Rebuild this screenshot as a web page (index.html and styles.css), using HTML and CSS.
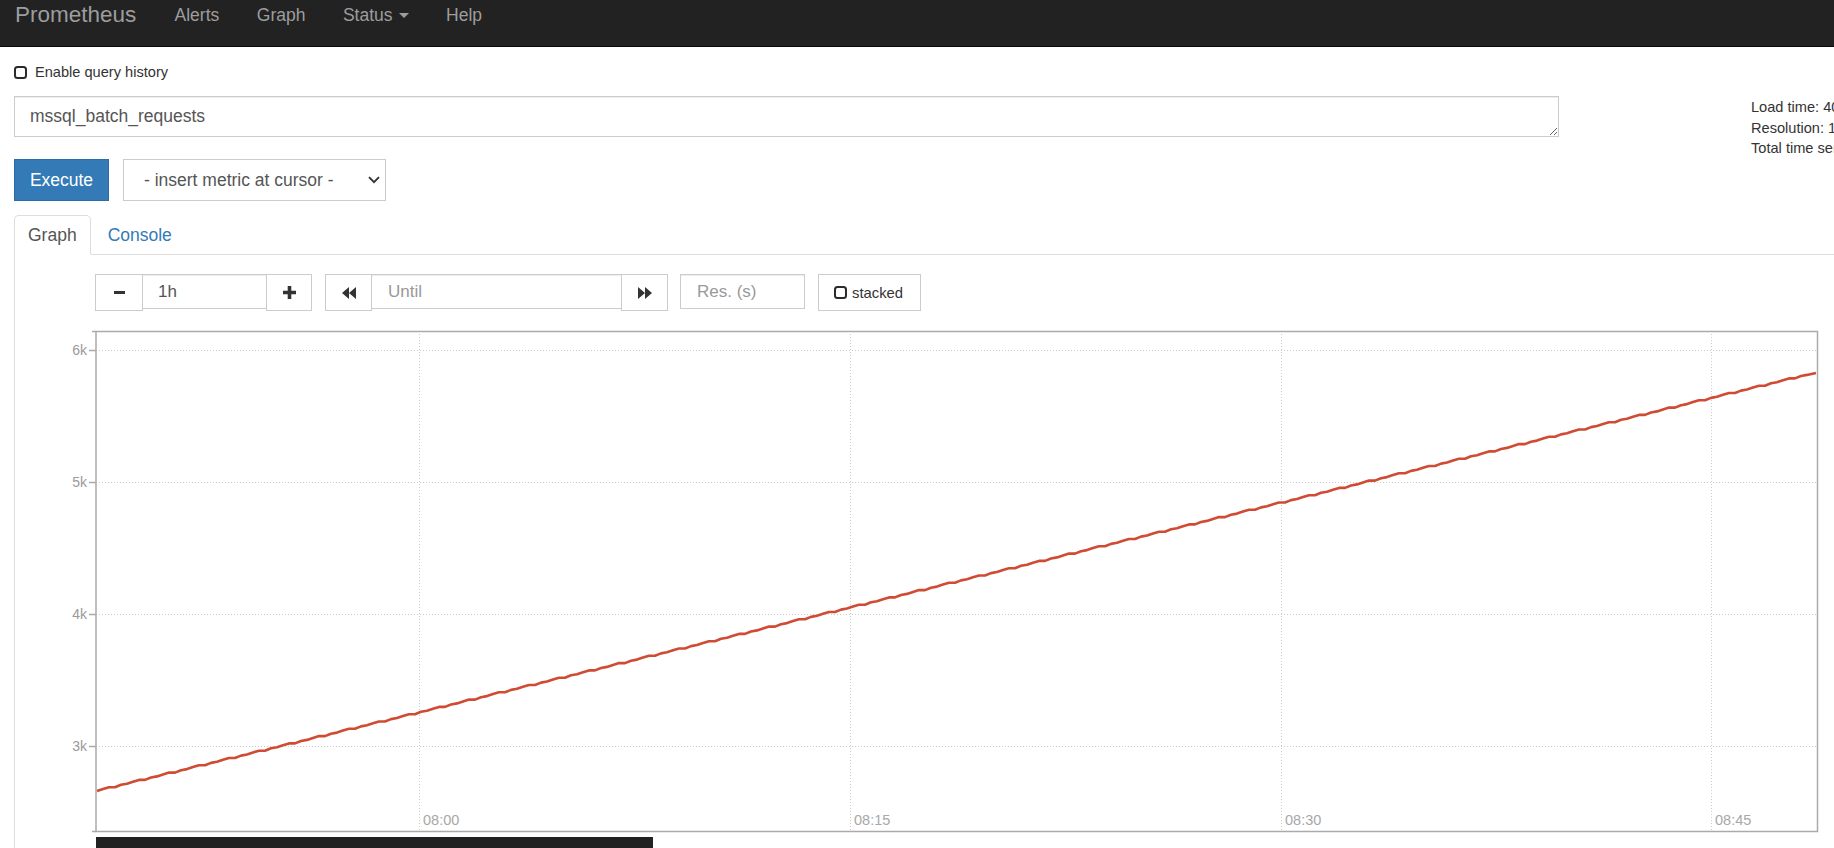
FILE: index.html
```html
<!DOCTYPE html>
<html>
<head>
<meta charset="utf-8">
<title>Prometheus Time Series Collection and Processing Server</title>
<link rel="stylesheet" href="styles.css">
</head>
<body>
<nav class="navbar">
  <span class="brand">Prometheus</span>
  <span class="nav-link">Alerts</span>
  <span class="nav-link">Graph</span>
  <span class="nav-link">Status <span class="caret"></span></span>
  <span class="nav-link">Help</span>
</nav>
<div class="page">
  <label class="history"><input type="checkbox" class="check"> Enable query history</label>
  <div class="query-row">
    <textarea class="expr" rows="1">mssql_batch_requests</textarea>
    <div class="stats">
      <div>Load time: 40ms</div>
      <div>Resolution: 14s</div>
      <div>Total time series: 1</div>
    </div>
  </div>
  <div class="exec-row">
    <button class="btn-primary">Execute</button>
    <div class="select-wrap">
      <select class="metric-select"><option>- insert metric at cursor -</option></select>
      <svg class="chevron" width="12" height="8" viewBox="0 0 12 8"><path d="M1 1.2L6 6.2L11 1.2" fill="none" stroke="#333" stroke-width="1.9"/></svg>
    </div>
  </div>
  <div class="tabs">
    <div class="tab active">Graph</div>
    <div class="tab link">Console</div>
  </div>
  <div class="tab-content">
    <div class="controls">
      <div class="group">
        <button class="btn w48"><svg width="11" height="3" viewBox="0 0 11 3"><rect width="11" height="3" fill="#333"/></svg></button>
        <input class="field w123" value="1h">
        <button class="btn w46"><svg width="13" height="13" viewBox="0 0 13 13"><path d="M4.7 0h3.6v4.7H13v3.6H8.3V13H4.7V8.3H0V4.7h4.7z" fill="#333"/></svg></button>
      </div>
      <div class="group">
        <button class="btn w47"><svg width="14" height="12" viewBox="0 0 14 12"><path d="M7 0L0 6L7 12ZM14 0L7 6L14 12Z" fill="#333"/></svg></button>
        <input class="field w249" placeholder="Until">
        <button class="btn w47"><svg width="14" height="12" viewBox="0 0 14 12"><path d="M0 0L7 6L0 12ZM7 0L14 6L7 12Z" fill="#333"/></svg></button>
      </div>
      <input class="field full w125" placeholder="Res. (s)">
      <button class="btn stacked"><input type="checkbox" class="check"> stacked</button>
    </div>
    <svg class="chart" width="1774" height="510" viewBox="0 0 1774 510">
      <g stroke="#ccc" stroke-width="1" stroke-dasharray="1 2" fill="none">
        <path d="M36 25.5H1757M36 157.5H1757M36 289.5H1757M36 421.5H1757"/>
        <path d="M359.5 6V506M790.5 6V506M1221.5 6V506M1651.5 6V506"/>
      </g>
      <g stroke="#aaa" stroke-width="1.5" fill="none">
        <path d="M32 6.5H1757.5V506.5H36V6.5"/>
        <path d="M32 506.5H36"/>
        <path d="M29 25.5H36M29 157.5H36M29 289.5H36M29 421.5H36"/>
      </g>
      <g class="ylab" text-anchor="end">
        <text x="27" y="30">6k</text>
        <text x="27" y="162">5k</text>
        <text x="27" y="294">4k</text>
        <text x="27" y="426">3k</text>
      </g>
      <g class="xlab">
        <text x="363" y="500">08:00</text>
        <text x="794" y="500">08:15</text>
        <text x="1225" y="500">08:30</text>
        <text x="1655" y="500">08:45</text>
      </g>
      <path class="series" d="M37 466l
6-2 6-1.8 6 0 6-2.4 6-1.1 6-2 6-1.8 6 0 6-2.4 6-1.1 6-2 6-1.8 6 0 6-2.4 6-1.1 6-2 6-1.8 6 0 6-2.4 6-1.1 6-2 6-1.8 6 0 6-2.4 6-1.1 6-2 6-1.8 6 0 6-2.4 6-1.1 6-2 6-1.8 6 0 6-2.4 6-1.1 6-2 6-1.8 6 0 6-2.4 6-1.1 6-2 6-1.8 6 0 6-2.4 6-1.1 6-2 6-1.8 6 0 6-2.4 6-1.1
6-2 6-1.8 6 0 6-2.4 6-1.1 6-2 6-1.8 6 0 6-2.4 6-1.1 6-2 6-1.8 6 0 6-2.4 6-1.1 6-2 6-1.8 6 0 6-2.4 6-1.1 6-2 6-1.8 6 0 6-2.4 6-1.1 6-2 6-1.8 6 0 6-2.4 6-1.1 6-2 6-1.8 6 0 6-2.4 6-1.1 6-2 6-1.8 6 0 6-2.4 6-1.1 6-2 6-1.8 6 0 6-2.4 6-1.1 6-2 6-1.8 6 0 6-2.4 6-1.1
6-2 6-1.8 6 0 6-2.4 6-1.1 6-2 6-1.8 6 0 6-2.4 6-1.1 6-2 6-1.8 6 0 6-2.4 6-1.1 6-2 6-1.8 6 0 6-2.4 6-1.1 6-2 6-1.8 6 0 6-2.4 6-1.1 6-2 6-1.8 6 0 6-2.4 6-1.1 6-2 6-1.8 6 0 6-2.4 6-1.1 6-2 6-1.8 6 0 6-2.4 6-1.1 6-2 6-1.8 6 0 6-2.4 6-1.1 6-2 6-1.8 6 0 6-2.4 6-1.1
6-2 6-1.8 6 0 6-2.4 6-1.1 6-2 6-1.8 6 0 6-2.4 6-1.1 6-2 6-1.8 6 0 6-2.4 6-1.1 6-2 6-1.8 6 0 6-2.4 6-1.1 6-2 6-1.8 6 0 6-2.4 6-1.1 6-2 6-1.8 6 0 6-2.4 6-1.1 6-2 6-1.8 6 0 6-2.4 6-1.1 6-2 6-1.8 6 0 6-2.4 6-1.1 6-2 6-1.8 6 0 6-2.4 6-1.1 6-2 6-1.8 6 0 6-2.4 6-1.1
6-2 6-1.8 6 0 6-2.4 6-1.1 6-2 6-1.8 6 0 6-2.4 6-1.1 6-2 6-1.8 6 0 6-2.4 6-1.1 6-2 6-1.8 6 0 6-2.4 6-1.1 6-2 6-1.8 6 0 6-2.4 6-1.1 6-2 6-1.8 6 0 6-2.4 6-1.1 6-2 6-1.8 6 0 6-2.4 6-1.1 6-2 6-1.8 6 0 6-2.4 6-1.1 6-2 6-1.8 6 0 6-2.4 6-1.1 6-2 6-1.8 6 0 6-2.4 6-1.1
6-2 6-1.8 6 0 6-2.4 6-1.1 6-2 6-1.8 6 0 6-2.4 6-1.1 6-2 6-1.8 6 0 6-2.4 6-1.1 6-2 6-1.8 6 0 6-2.4 6-1.1 6-2 6-1.8 6 0 6-2.4 6-1.1 6-2 6-1.8 6 0 6-2.4 6-1.1 6-2 6-1.8 6 0 6-2.4 6-1.1
9-1.9"/>
    </svg>
    <div class="legend-bar"></div>
  </div>
</div>
</body>
</html>
```
FILE: styles.css
```css
html, body {
  margin: 0;
  padding: 0;
  overflow: hidden;
  width: 1834px;
  height: 848px;
  background: #fff;
}
body {
  font-family: "Liberation Sans", Arial, sans-serif;
  color: #333;
}
.navbar {
  box-sizing: border-box;
  height: 47px;
  background: #222;
  border-bottom: 1px solid #080808;
  display: flex;
  align-items: center;
  padding: 0 0 17px 15px;
}
.brand {
  font-size: 22.5px;
  line-height: 28px;
  color: #9d9d9d;
  margin-right: 19.5px;
}
.nav-link {
  font-size: 17.5px;
  line-height: 28px;
  color: #9d9d9d;
  padding: 0 18.75px;
  display: flex;
  align-items: center;
}
.caret {
  display: inline-block;
  width: 0;
  height: 0;
  border-left: 5px solid transparent;
  border-right: 5px solid transparent;
  border-top: 5px solid #9d9d9d;
  margin-left: 6px;
  margin-top: 2px;
}
.page {
  padding-left: 14px;
  height: 801px;
  overflow: hidden;
}
.check {
  appearance: none;
  -webkit-appearance: none;
  box-sizing: border-box;
  width: 13px;
  height: 13px;
  border: 2.4px solid #2b2b2b;
  border-radius: 3.5px;
  margin: 0 8px 0 0;
  background: #fff;
}
.history {
  display: flex;
  align-items: center;
  margin-top: 15px;
  font-size: 14.6px;
  line-height: 20.5px;
  height: 20.5px;
}
.query-row {
  display: flex;
  align-items: flex-start;
  margin-top: 13.5px;
  height: 41px;
}
.expr {
  flex: none;
  box-sizing: border-box;
  width: 1545px;
  height: 41px;
  border: 1px solid #ccc;
  border-radius: 0;
  padding: 7px 15px;
  font-family: "Liberation Sans", Arial, sans-serif;
  font-size: 17.5px;
  line-height: 25px;
  color: #555;
  margin: 0;
  box-shadow: inset 0 1px 1px rgba(0,0,0,.075);
}
.stats {
  flex: none;
  margin-left: 192px;
  padding-top: 1px;
  font-size: 14.6px;
  line-height: 20.5px;
  white-space: nowrap;
}
.exec-row {
  display: flex;
  gap: 14px;
  margin-top: 22px;
}
.btn-primary {
  box-sizing: border-box;
  width: 95px;
  height: 42px;
  background: #337ab7;
  border: 1px solid #2e6da4;
  border-radius: 0;
  color: #fff;
  font-family: "Liberation Sans", Arial, sans-serif;
  font-size: 17.5px;
  padding: 0;
  margin: 0;
}
.select-wrap {
  position: relative;
  width: 263px;
  height: 42px;
}
.metric-select {
  appearance: none;
  -webkit-appearance: none;
  box-sizing: border-box;
  width: 263px;
  height: 42px;
  border: 1px solid #ccc;
  border-radius: 0;
  background: #fff;
  padding: 0 0 0 20px;
  margin: 0;
  font-family: "Liberation Sans", Arial, sans-serif;
  font-size: 17.5px;
  color: #555;
}
.chevron {
  position: absolute;
  left: 245px;
  top: 17px;
}
.tabs {
  display: flex;
  box-sizing: border-box;
  height: 40px;
  margin-top: 14px;
  border-bottom: 1px solid #ddd;
}
.tab {
  box-sizing: border-box;
  height: 40px;
  padding: 0 13px;
  line-height: 38px;
  font-size: 17.5px;
  border: 1px solid transparent;
  margin-right: 3px;
}
.tab.active {
  color: #555;
  background: #fff;
  border-color: #ddd #ddd transparent #ddd;
  border-radius: 5px 5px 0 0;
}
.tab.link {
  color: #337ab7;
}
.tab-content {
  border-left: 1px solid #ddd;
  padding: 19px 0 0 45px;
  height: 600px;
}
.controls {
  display: flex;
  align-items: flex-start;
  margin-left: 35px;
  height: 37px;
}
.group {
  display: flex;
  align-items: flex-start;
  margin-right: 13px;
}
.group + .group {
  margin-right: 12px;
}
.btn {
  box-sizing: border-box;
  height: 37px;
  background: #fff;
  border: 1px solid #ccc;
  border-radius: 0;
  padding: 0;
  margin: 0;
  display: flex;
  align-items: center;
  justify-content: center;
  font-family: "Liberation Sans", Arial, sans-serif;
  color: #333;
}
.field {
  box-sizing: border-box;
  height: 35px;
  border: 1px solid #ccc;
  border-left: 0;
  border-right: 0;
  border-radius: 0;
  margin: 0;
  padding: 0 0 0 15px;
  font-family: "Liberation Sans", Arial, sans-serif;
  font-size: 17px;
  color: #555;
  box-shadow: inset 0 1px 1px rgba(0,0,0,.075);
  outline: none;
}
.field.full {
  border-left: 1px solid #ccc;
  border-right: 1px solid #ccc;
  margin-right: 13px;
}
.field::placeholder {
  color: #999;
}
.w46 { width: 46px; }
.w47 { width: 47px; }
.w48 { width: 48px; }
.w123 { width: 123px; }
.w249 { width: 249px; padding-left: 16px; }
.w125 { width: 125px; padding-left: 16px; }
.stacked {
  width: 103px;
  font-size: 14.8px;
  justify-content: flex-start;
  padding-left: 15px;
}
.stacked .check {
  margin-right: 5px;
}
.chart {
  display: block;
  margin-top: 14px;
  overflow: visible;
}
.ylab text {
  font-family: "Liberation Sans", Arial, sans-serif;
  font-size: 14px;
  fill: #9a9a9a;
}
.xlab text {
  font-family: "Liberation Sans", Arial, sans-serif;
  font-size: 14.5px;
  fill: #a8a8a8;
}
.series {
  fill: none;
  stroke: #cf4b33;
  stroke-width: 2.6;
  stroke-linejoin: round;
}
.legend-bar {
  margin: 2px 0 0 36px;
  width: 557px;
  height: 20px;
  background: #222;
}
```
